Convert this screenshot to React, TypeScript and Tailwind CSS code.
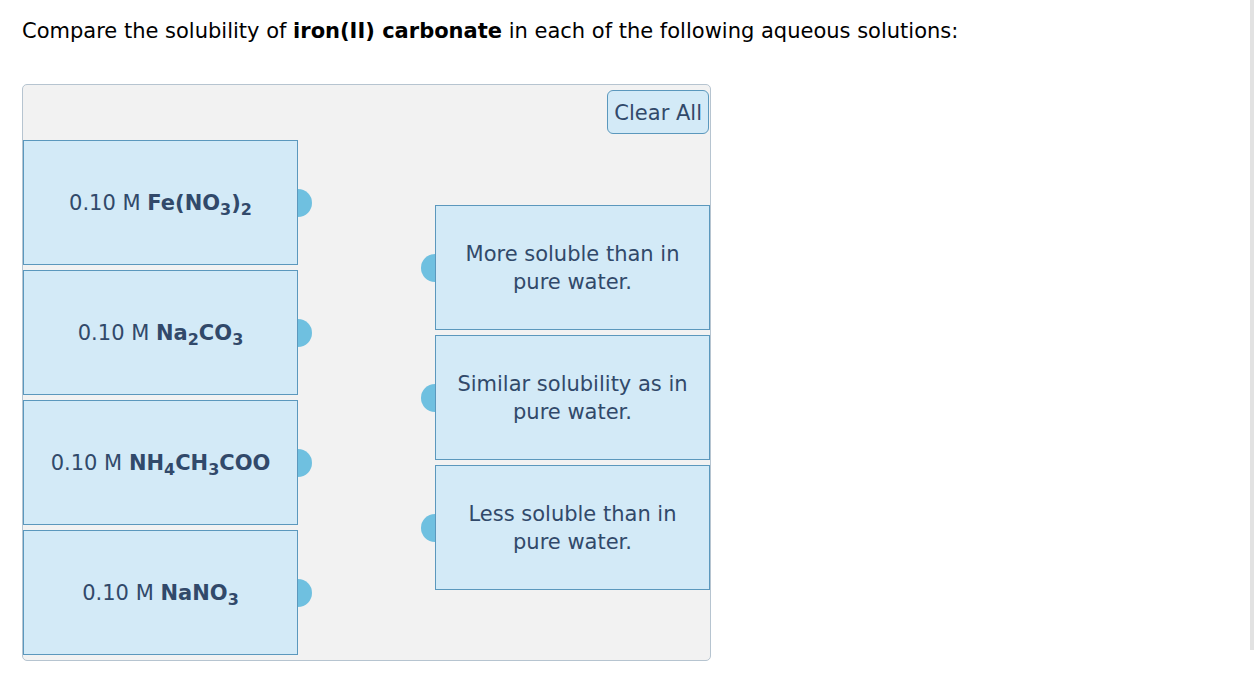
import type { ReactNode } from 'react'

type Item = { id: string; label: ReactNode }

// preflight already shrinks <sub>; push it a bit further below the baseline
const Sub = ({ children }: { children: ReactNode }) => (
  <sub className="text-[0.76em] bottom-[-0.3em]">{children}</sub>
)

const solutions: Item[] = [
  {
    id: 'fe',
    label: (
      <>
        0.10 M{' '}
        <b>
          Fe(NO<Sub>3</Sub>)<Sub>2</Sub>
        </b>
      </>
    ),
  },
  {
    id: 'na2co3',
    label: (
      <>
        0.10 M{' '}
        <b>
          Na<Sub>2</Sub>CO<Sub>3</Sub>
        </b>
      </>
    ),
  },
  {
    id: 'nh4',
    label: (
      <>
        0.10 M{' '}
        <b>
          NH<Sub>4</Sub>CH<Sub>3</Sub>COO
        </b>
      </>
    ),
  },
  {
    id: 'nano3',
    label: (
      <>
        0.10 M{' '}
        <b>
          NaNO<Sub>3</Sub>
        </b>
      </>
    ),
  },
]

const targets: Item[] = [
  { id: 'more', label: 'More soluble than in pure water.' },
  { id: 'similar', label: 'Similar solubility as in pure water.' },
  { id: 'less', label: 'Less soluble than in pure water.' },
]

function Tile({ item, side }: { item: Item; side: 'left' | 'right' }) {
  return (
    <div className="relative h-[125px] w-[275px]">
      <span
        className={`absolute top-1/2 -translate-y-1/2 w-[28px] h-[28px] rounded-full bg-[#6fc0e0] ${
          side === 'right' ? 'right-[-14px]' : 'left-[-14px]'
        }`}
      />
      <div className="relative h-full w-full flex items-center justify-center px-5 pt-px text-center bg-[#d3eaf7] border border-[#5b98bd] text-[#31496a] text-[21px] leading-[28px]">
        <span>{item.label}</span>
      </div>
    </div>
  )
}

export default function App() {
  return (
    <div className="relative min-h-[675px] bg-white font-['DejaVu_Sans',sans-serif] text-[21px]">
      <div className="px-[22px] pt-[18px]">
        <p className="text-black leading-[27px]">
          Compare the solubility of <b>iron(II) carbonate</b> in each of the following aqueous solutions:
        </p>

        <div className="mt-[39px] w-[689px] h-[577px] bg-[#f2f2f2] border border-[#b6c4d0] rounded-[5px] pt-[5px] pr-px">
          <div className="flex justify-end">
            <button className="h-[44px] px-[6px] pt-[3px] bg-[#d3eaf7] border border-[#5b98bd] rounded-[6px] text-[#31496a] text-[21px]">
              Clear All
            </button>
          </div>

          <div className="mt-[6px] flex gap-[137px]">
            <div className="flex flex-col gap-[5px]">
              {solutions.map((s) => (
                <Tile key={s.id} item={s} side="right" />
              ))}
            </div>
            <div className="mt-[65px] flex flex-col gap-[5px]">
              {targets.map((t) => (
                <Tile key={t.id} item={t} side="left" />
              ))}
            </div>
          </div>
        </div>
      </div>

      <div className="absolute right-0 top-0 w-[4px] h-[650px] bg-[#e2e2e2]" />
    </div>
  )
}
